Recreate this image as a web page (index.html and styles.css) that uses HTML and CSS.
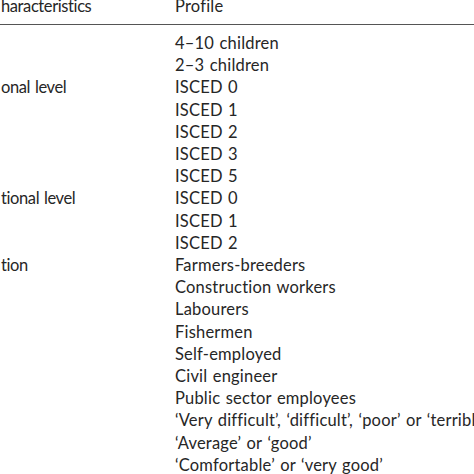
FILE: index.html
```html
<!DOCTYPE html>
<html lang="en">
<head>
<meta charset="utf-8">
<link rel="stylesheet" href="styles.css">
</head>
<body>
<div class="table">
  <div class="head">
    <div class="cell label">haracteristics</div>
    <div class="cell">Profile</div>
  </div>
  <div class="body">
    <div class="cell label"></div><div class="cell">4–10 children</div>
    <div class="cell label"></div><div class="cell">2–3 children</div>
    <div class="cell label">onal level</div><div class="cell">ISCED 0</div>
    <div class="cell label"></div><div class="cell">ISCED 1</div>
    <div class="cell label"></div><div class="cell">ISCED 2</div>
    <div class="cell label"></div><div class="cell">ISCED 3</div>
    <div class="cell label"></div><div class="cell">ISCED 5</div>
    <div class="cell label">tional level</div><div class="cell">ISCED 0</div>
    <div class="cell label"></div><div class="cell">ISCED 1</div>
    <div class="cell label"></div><div class="cell">ISCED 2</div>
    <div class="cell label">tion</div><div class="cell">Farmers-breeders</div>
    <div class="cell label"></div><div class="cell">Construction workers</div>
    <div class="cell label"></div><div class="cell">Labourers</div>
    <div class="cell label"></div><div class="cell">Fishermen</div>
    <div class="cell label"></div><div class="cell">Self-employed</div>
    <div class="cell label"></div><div class="cell">Civil engineer</div>
    <div class="cell label"></div><div class="cell">Public sector employees</div>
    <div class="cell label"></div><div class="cell">‘Very difficult’, ‘difficult’, ‘poor’ or ‘terrible’</div>
    <div class="cell label"></div><div class="cell">‘Average’ or ‘good’</div>
    <div class="cell label"></div><div class="cell">‘Comfortable’ or ‘very good’</div>
  </div>
</div>
</body>
</html>
```

FILE: styles.css
```css
html, body {
  margin: 0;
  padding: 0;
  background: #ffffff;
  overflow: hidden;
}
body {
  width: 474px;
  height: 474px;
  font-family: Lato, "Open Sans", sans-serif;
  font-size: 16.5px;
  line-height: 22.2px;
  color: #262626;
}
.head {
  display: grid;
  grid-template-columns: 174px 1fr;
  line-height: 12px;
  padding-left: 1px;
  padding-top: 0;
  padding-bottom: 11.5px;
  border-bottom: 1.6px solid #555555;
}
.body {
  display: grid;
  grid-template-columns: 174px 1fr;
  padding-left: 1px;
  padding-top: 7.4px;
}
.cell {
  white-space: nowrap;
  letter-spacing: 0.2px;
  word-spacing: 1px;
}
.cell.label {
  letter-spacing: -0.4px;
}
```
